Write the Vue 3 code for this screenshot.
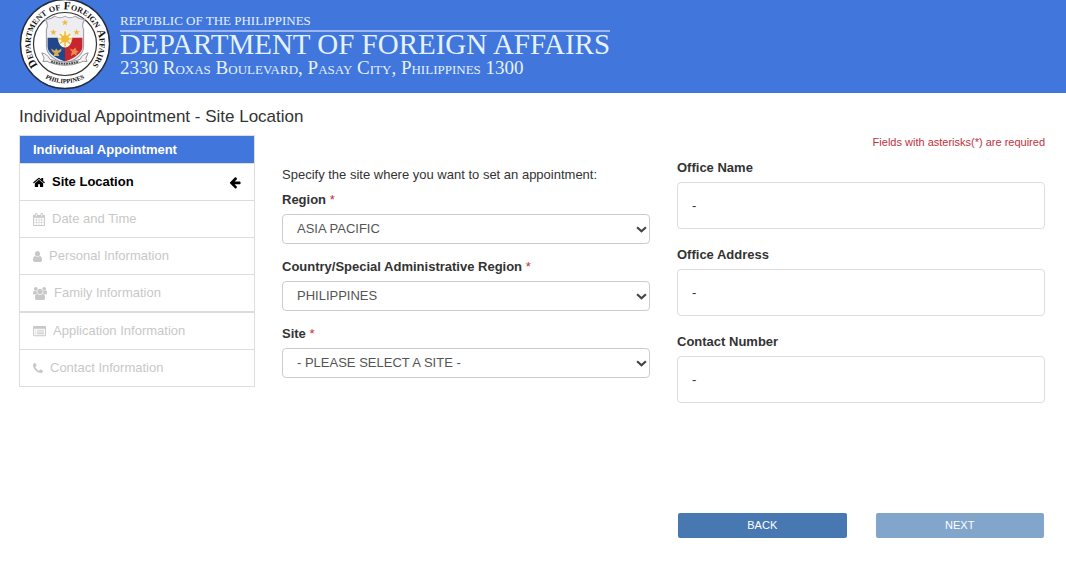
<template>
  <header class="banner">
    <svg class="seal" viewBox="0 0 92 92" role="img" aria-label="Department of Foreign Affairs seal">
      <defs>
        <path id="seal-top" d="M 21.600 70.400 A 34.500 34.500 0 1 1 70.400 70.400" />
        <path id="seal-bottom" d="M 14 69 A 39.500 39.500 0 0 0 78 69" />
      </defs>
      <circle cx="46" cy="46" r="44.500" fill="#fff" stroke="#222b3c" stroke-width="1.400" />
      <circle cx="46" cy="46" r="31.500" fill="#fff" stroke="#333" stroke-width="1.200" />
      <text class="seal-text" font-size="11.300">
        <textPath href="#seal-top" startOffset="50%" text-anchor="middle">Department of Foreign Affairs</textPath>
      </text>
      <text class="seal-text" font-size="6.400">
        <textPath href="#seal-bottom" startOffset="50%" text-anchor="middle">PHILIPPINES</textPath>
      </text>
      <g transform="translate(46 43) scale(1.160 1.080) translate(-46 -43)">
        <path d="M46 20 Q50 23 55 20 Q58 23 63 23 Q60 28 62 32 V48 Q62 58 46 64 Q30 58 30 48 V32 Q32 28 29 23 Q34 23 37 20 Q42 23 46 20Z" fill="#eeeef2" stroke="#a3a3ab" stroke-width="1" />
        <path d="M31 40 H46 V62 Q31 56 31 48Z" fill="#21468b" />
        <path d="M46 40 H61 V48 Q61 56 46 62Z" fill="#c8262e" />
        <g fill="#edb93e">
          <path v-for="s in stars" :key="s" :d="star" :transform="s" />
        </g>
        <ellipse cx="46" cy="41" rx="6" ry="8" fill="#fbf4dc" />
        <path d="M46 34v14M39.500 41h13M41.500 36.500l9 9M50.500 36.500l-9 9" stroke="#edb93e" stroke-width="1.300" />
        <circle cx="46" cy="41" r="3.400" fill="#f0b938" />
        <path d="M34 50q1 4 3 4l-1 3h5l-1-3q3 0 3-4l-3 2-1.500-2-1.500 2z" fill="#d3ad57" />
        <path d="M50 50l3 1 2-2 1 3 2 1-2 1v3l-2-2-3 2 1-4z" fill="#f0894a" />
        <path d="M26 54q5 1 7 6 13 5 26 0 2-5 7-6l-2 5 1 3q-4-1-6 1-13 5-26 0-2-2-6-1l1-3z" fill="#f4f4f4" stroke="#888" stroke-width="0.800" />
        <path d="M34 62q12 4 24 0" fill="none" stroke="#444" stroke-width="1.800" stroke-dasharray="1.500 0.700" />
      </g>
    </svg>
    <div class="banner-text">
      <span class="republic">REPUBLIC OF THE PHILIPPINES</span>
      <span class="department">DEPARTMENT OF FOREIGN AFFAIRS</span>
      <span class="address">2330 Roxas Boulevard, Pasay City, Philippines 1300</span>
    </div>
  </header>

  <main class="page">
    <h1>Individual Appointment - Site Location</h1>

    <div class="columns">
      <nav class="steps" aria-label="Individual Appointment">
        <h2>Individual Appointment</h2>
        <ul>
          <li v-for="step in steps" :key="step.label" :class="{ active: step.active, split: step.split }">
            <svg :viewBox="step.box" :class="['icon', step.size]" aria-hidden="true">
              <path :d="step.icon" />
            </svg>
            <span>{{ step.label }}</span>
            <svg v-if="step.active" class="icon arrow" viewBox="64 0 1664 1792" aria-hidden="true">
              <path d="M1664 896v128q0 53-32.500 90.500t-84.500 37.500h-704l293 294q38 36 38 90t-38 90l-75 76q-37 37-90 37-52 0-91-37l-651-652q-37-37-37-90 0-52 37-91l651-650q38-38 91-38 52 0 90 38l75 74q38 38 38 91t-38 91l-293 293h704q52 0 84.500 37.500t32.500 90.500z" />
            </svg>
          </li>
        </ul>
      </nav>

      <form class="site-form" @submit.prevent>
        <p class="intro">Specify the site where you want to set an appointment:</p>
        <div v-for="field in fields" :key="field.id" class="field">
          <label :for="field.id">{{ field.label }} <span class="required">*</span></label>
          <div class="select-wrap">
            <select :id="field.id" v-model="field.value">
              <option>{{ field.value }}</option>
            </select>
            <svg class="chevron" viewBox="0 0 10 6" aria-hidden="true">
              <path d="M1 1l4 3.600L9 1" />
            </svg>
          </div>
        </div>
      </form>

      <section class="office">
        <p class="note">Fields with asterisks(*) are required</p>
        <div v-for="item in office" :key="item.id" class="office-item">
          <label :for="item.id">{{ item.label }}</label>
          <output :id="item.id">{{ item.value }}</output>
        </div>
        <div class="actions">
          <button type="button">BACK</button>
          <button type="button" disabled>NEXT</button>
        </div>
      </section>
    </div>
  </main>
</template>

<script setup>
import { ref } from "vue";

const star = "M0-3L.8-1 2.900-.9 1.200.4 1.800 2.500 0 1.300-1.800 2.500-1.200.4-2.900-.9-.8-1Z";
const stars = ["translate(46 26)", "translate(36 35)", "translate(56 35)"];

const steps = [
  {
    label: "Site Location",
    active: true,
    size: "w12",
    box: "64 0 1664 1792",
    icon: "M1472 992v480q0 26-19 45t-45 19h-384v-384h-256v384h-384q-26 0-45-19t-19-45v-480q0-1 .5-3t.5-3l575-474 575 474q1 2 1 6zm223-69l-62 74q-8 9-21 11h-3q-13 0-21-7l-692-577-692 577q-12 8-24 7-13-2-21-11l-62-74q-8-10-7-23.500t11-21.500l719-599q32-26 76-26t76 26l244 204v-195q0-14 9-23t23-9h192q14 0 23 9t9 23v408l219 182q10 8 11 21.500t-7 23.500z",
  },
  {
    label: "Date and Time",
    size: "w12",
    box: "64 0 1664 1792",
    icon: "M192 1664h288v-288h-288v288zm352 0h320v-288h-320v288zm-352-352h288v-320h-288v320zm352 0h320v-320h-320v320zm-352-384h288v-288h-288v288zm736 736h320v-288h-320v288zm-384-736h320v-288h-320v288zm768 736h288v-288h-288v288zm-384-352h320v-320h-320v320zm-352-864v-288q0-13-9.500-22.500t-22.500-9.500h-64q-13 0-22.500 9.500t-9.500 22.500v288q0 13 9.500 22.500t22.500 9.500h64q13 0 22.500-9.500t9.500-22.500zm736 864h288v-320h-288v320zm-384-384h320v-288h-320v288zm384 0h288v-288h-288v288zm32-480v-288q0-13-9.500-22.500t-22.500-9.500h-64q-13 0-22.500 9.500t-9.500 22.500v288q0 13 9.500 22.500t22.500 9.500h64q13 0 22.500-9.500t9.500-22.500zm384-64v1280q0 52-38 90t-90 38h-1408q-52 0-90-38t-38-90v-1280q0-52 38-90t90-38h128v-96q0-66 47-113t113-47h64q66 0 113 47t47 113v96h384v-96q0-66 47-113t113-47h64q66 0 113 47t47 113v96h128q52 0 90 38t38 90z",
  },
  {
    label: "Personal Information",
    size: "w9",
    box: "256 0 1280 1792",
    icon: "M1536 1399q0 109-62.500 187t-150.500 78h-854q-88 0-150.500-78t-62.500-187q0-85 8.500-160.500t31.500-152 58.500-131 94-89 134.500-34.500q131 128 313 128t313-128q76 0 134.500 34.500t94 89 58.500 131 31.500 152 8.500 160.500zm-256-887q0 159-112.500 271.500t-271.500 112.500-271.500-112.500-112.500-271.500 112.500-271.500 271.500-112.500 271.500 112.500 112.500 271.500z",
  },
  {
    label: "Family Information",
    size: "w14",
    box: "64 0 1920 1792",
    icon: "M657 896q-162 5-265 128h-134q-82 0-138-40.500t-56-118.500q0-353 124-353 6 0 43.500 21t97.500 42.500 119 21.500q67 0 133-23-5 37-5 66 0 159 93 293zm1071 637q0 120-73 189.500t-194 69.500h-874q-121 0-194-69.500t-73-189.500q0-53 3.500-103.500t14-109 26.500-108.500 43-97.500 62-81 85.500-53.500 111.500-20q10 0 43 21.500t73 48 107 48 135 21.500 135-21.500 107-48 73-48 43-21.500q61 0 111.500 20t85.500 53.500 62 81 43 97.500 26.500 108.500 14 109 3.500 103.500zm-1024-1277q0 106-75 181t-181 75-181-75-75-181 75-181 181-75 181 75 75 181zm704 384q0 159-112.500 271.500t-271.500 112.500-271.500-112.500-112.500-271.500 112.500-271.500 271.500-112.500 271.500 112.500 112.500 271.500zm576 225q0 78-56 118.500t-138 40.500h-134q-103-123-265-128 93-134 93-293 0-29-5-66 66 23 133 23 59 0 119-21.500t97.500-42.500 43.500-21q124 0 124 353zm-128-609q0 106-75 181t-181 75-181-75-75-181 75-181 181-75 181 75 75 181z",
  },
  {
    label: "Application Information",
    split: true,
    size: "w13",
    box: "0 0 1792 1792",
    icon: "M160 128h1472q66 0 113 47t47 113v1088q0 66-47 113t-113 47H160q-66 0-113-47T0 1376V288q0-66 47-113t113-47zM128 512v864q0 32 32 32h1472q32 0 32-32V512zM256 640h128v128H256zM512 640h1024v128H512zM256 896h128v128H256zM512 896h1024v128H512zM256 1152h128v128H256zM512 1152h1024v128H512z",
  },
  {
    label: "Contact Information",
    size: "w10",
    box: "192 0 1408 1792",
    icon: "M1600 1240q0 27-10 70.500t-21 68.500q-21 50-122 106-94 51-186 51-27 0-53-3.500t-57.500-12.500-47-14.500-55.500-20.500-49-18q-98-35-175-83-127-79-264-216t-216-264q-48-77-83-175-3-9-18-49t-20.500-55.500-14.500-47-12.500-57.500-3.500-53q0-92 51-186 56-101 106-122 25-11 68.500-21t70.500-10q14 0 21 3 18 6 53 76 11 19 30 54t35 63.500 31 53.500q3 4 17.500 25t21.500 35.500 7 28.500q0 20-28.500 50t-62 55-62 53-28.500 46q0 9 5 22.500t8.500 20.500 14 24 11.500 19q76 137 174 235t235 174q2 1 19 11.500t24 14 20.500 8.500 22.500 5q18 0 46-28.500t53-62 55-62 50-28.500q14 0 28.500 7t35.500 21.500 25 17.500q25 15 53.500 31t63.500 35 54 30q70 35 76 53 3 7 3 21z",
  },
];

const fields = ref([
  { id: "region", label: "Region", value: "ASIA PACIFIC" },
  { id: "country", label: "Country/Special Administrative Region", value: "PHILIPPINES" },
  { id: "site", label: "Site", value: "- PLEASE SELECT A SITE -" },
]);

const office = [
  { id: "office-name", label: "Office Name", value: "-" },
  { id: "office-address", label: "Office Address", value: "-" },
  { id: "contact-number", label: "Contact Number", value: "-" },
];
</script>

<style>
body {
  margin: 0;
  background: #fff;
  color: #333;
  font-family: "Liberation Sans", Arial, sans-serif;
  font-size: 13px;
  line-height: 18px;
}
</style>

<style scoped>
.banner {
  display: flex;
  align-items: flex-start;
  gap: 9px;
  padding: 0 19px 3px;
  overflow: hidden;
  background: #4176dc;
}

.seal {
  width: 92px;
  height: 92px;
  margin-top: -2px;
  flex: none;
}

.seal-text {
  font-family: "Liberation Serif", serif;
  font-weight: bold;
  font-variant: small-caps;
  fill: #111;
}

.banner-text {
  display: flex;
  flex-direction: column;
  align-items: flex-start;
  padding-top: 12px;
  color: #e4f2ff;
  font-family: "Liberation Serif", "Times New Roman", serif;
  white-space: nowrap;
}

.republic {
  font-size: 13px;
  line-height: 18px;
}

.department {
  border-top: 2px solid #9bb7ee;
  font-size: 29px;
  line-height: 25px;
}

.address {
  font-size: 19px;
  line-height: 21px;
  font-variant: small-caps;
}

.page {
  padding: 14px 21px 24px 19px;
}

h1 {
  margin: 0 0 8px;
  font-size: 17px;
  line-height: 20px;
  font-weight: 500;
}

.columns {
  display: grid;
  grid-template-columns: 236fr 368fr 368fr;
  gap: 27px;
  align-items: start;
}

.steps {
  border: 1px solid #ddd;
  border-bottom: 0;
}

.steps h2 {
  margin: 0;
  padding: 0 13px;
  border-bottom: 1px solid #ddd;
  background: #4176dc;
  color: #fff;
  font-size: 13px;
  line-height: 27px;
}

.steps ul {
  margin: 0;
  padding: 0;
  list-style: none;
}

.steps li {
  display: flex;
  align-items: center;
  gap: 7px;
  height: 36px;
  padding: 0 13px;
  border-bottom: 1px solid #ddd;
  color: #c8c8c8;
}

.steps li.active {
  color: #000;
  font-weight: bold;
}

.steps li.split {
  border-top: 1px solid #ddd;
}

.icon {
  height: 13px;
  fill: currentColor;
  fill-rule: evenodd;
  flex: none;
}

.w9 {
  width: 9px;
}

.w10 {
  width: 10px;
}

.w12,
.arrow {
  width: 12px;
}

.w13 {
  width: 13px;
}

.w14 {
  width: 14px;
}

.arrow {
  margin-left: auto;
}

.intro {
  margin: 0 0 7px;
  padding-top: 31px;
}

label {
  display: block;
  margin-bottom: 5px;
  font-weight: bold;
}

.required {
  color: #c0303c;
  font-weight: normal;
}

.field {
  margin-bottom: 14px;
}

.select-wrap {
  position: relative;
}

select {
  display: block;
  width: 100%;
  height: 30px;
  padding: 0 30px 0 14px;
  border: 1px solid #ccc;
  border-radius: 4px;
  background: #fff;
  color: #555;
  font: inherit;
  appearance: none;
}

.chevron {
  position: absolute;
  top: 12px;
  right: 3px;
  width: 11px;
  height: 7px;
  fill: none;
  stroke: #444;
  stroke-width: 2;
  pointer-events: none;
}

.note {
  margin: 0 0 10px;
  color: #c0303c;
  font-size: 11px;
  line-height: 14px;
  text-align: right;
}

.office-item {
  margin-bottom: 17px;
}

output {
  display: block;
  padding: 14px;
  border: 1px solid #ddd;
  border-radius: 4px;
  line-height: 17px;
}

.actions {
  display: grid;
  grid-template-columns: 1fr 1fr;
  gap: 29px;
  margin-top: 110px;
  padding: 0 1px;
}

button {
  height: 25px;
  padding: 0 12px 1px;
  border: 0;
  border-radius: 2px;
  background: #4778b2;
  color: #fff;
  font-family: inherit;
  font-size: 11px;
}

button:disabled {
  background: #82a5cc;
}
</style>
